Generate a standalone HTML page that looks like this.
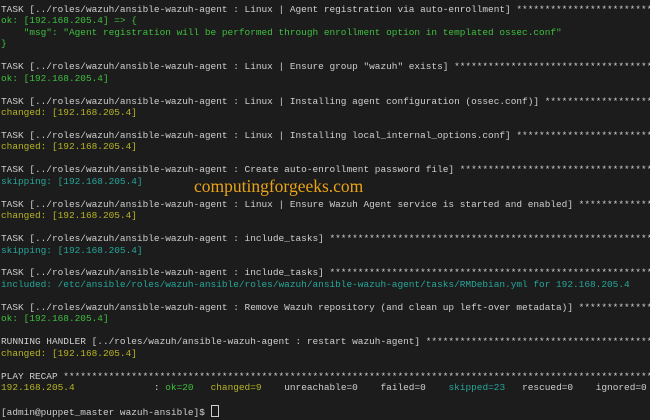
<!DOCTYPE html>
<html><head><meta charset="utf-8"><style>
html,body{margin:0;padding:0;background:#1c1c1c;width:650px;height:420px;overflow:hidden}
pre{margin:0;padding:4px 0 0 1px;font-family:"Liberation Mono",monospace;font-size:9.45px;line-height:11.45px;color:#cfcfcf;white-space:pre;overflow:hidden;width:650px}
.g{color:#3fbf3f}.y{color:#b8b424}.c{color:#26a69a}
.wm{position:absolute;left:194px;top:176px;font-family:"Liberation Serif",serif;font-size:17.5px;color:#e8a317}
.cur{display:inline-block;width:6px;height:10px;border:1px solid #cfcfcf;vertical-align:-2px}
</style></head><body>
<pre>TASK [../roles/wazuh/ansible-wazuh-agent : Linux | Agent registration via auto-enrollment] ***************************************
<span class="g">ok: [192.168.205.4] =&gt; {
    "msg": "Agent registration will be performed through enrollment option in templated ossec.conf"
}</span>

TASK [../roles/wazuh/ansible-wazuh-agent : Linux | Ensure group "wazuh" exists] **************************************************
<span class="g">ok: [192.168.205.4]</span>

TASK [../roles/wazuh/ansible-wazuh-agent : Linux | Installing agent configuration (ossec.conf)] ***********************************
<span class="y">changed: [192.168.205.4]</span>

TASK [../roles/wazuh/ansible-wazuh-agent : Linux | Installing local_internal_options.conf] ****************************************
<span class="y">changed: [192.168.205.4]</span>

TASK [../roles/wazuh/ansible-wazuh-agent : Create auto-enrollment password file] *************************************************
<span class="c">skipping: [192.168.205.4]</span>

TASK [../roles/wazuh/ansible-wazuh-agent : Linux | Ensure Wazuh Agent service is started and enabled] *****************************
<span class="y">changed: [192.168.205.4]</span>

TASK [../roles/wazuh/ansible-wazuh-agent : include_tasks] ************************************************************************
<span class="c">skipping: [192.168.205.4]</span>

TASK [../roles/wazuh/ansible-wazuh-agent : include_tasks] ************************************************************************
<span class="c">included: /etc/ansible/roles/wazuh-ansible/roles/wazuh/ansible-wazuh-agent/tasks/RMDebian.yml for 192.168.205.4</span>

TASK [../roles/wazuh/ansible-wazuh-agent : Remove Wazuh repository (and clean up left-over metadata)] *****************************
<span class="g">ok: [192.168.205.4]</span>

RUNNING HANDLER [../roles/wazuh/ansible-wazuh-agent : restart wazuh-agent] *******************************************************
<span class="y">changed: [192.168.205.4]</span>

PLAY RECAP ***********************************************************************************************************************
<span class="y">192.168.205.4</span>              : <span class="g">ok=20</span>   <span class="y">changed=9</span>    unreachable=0    failed=0    <span class="c">skipped=23</span>   rescued=0    ignored=0

[admin@puppet_master wazuh-ansible]$ <span class="cur"></span></pre>
<div class="wm">computingforgeeks.com</div>
</body></html>
